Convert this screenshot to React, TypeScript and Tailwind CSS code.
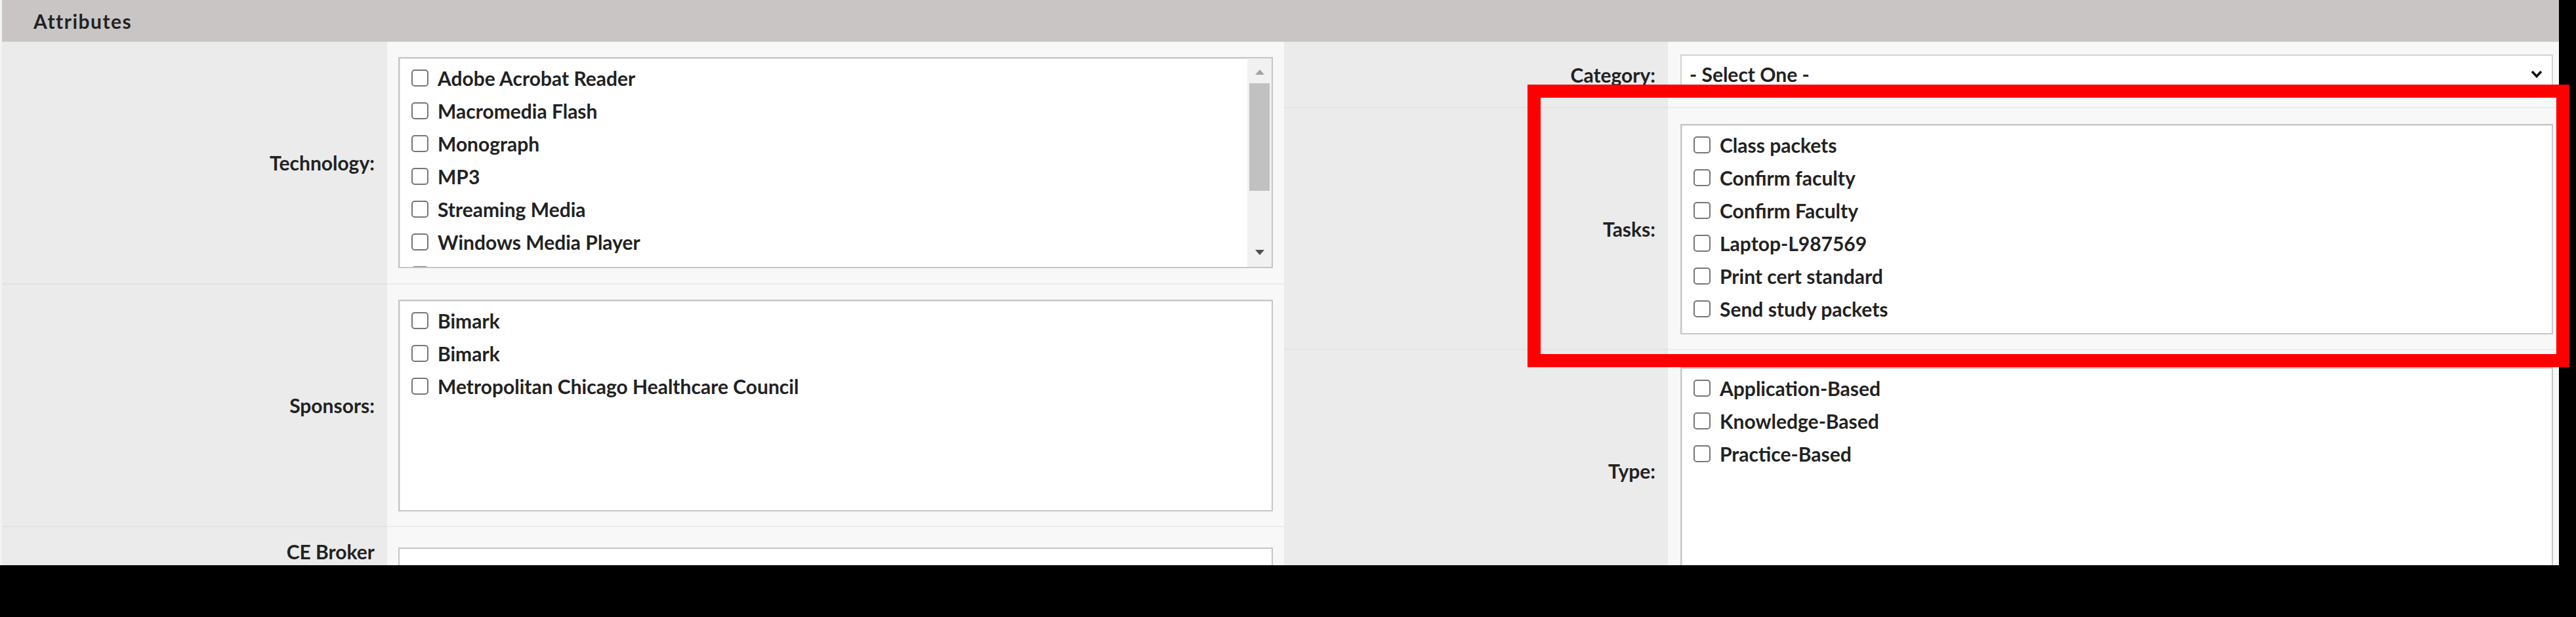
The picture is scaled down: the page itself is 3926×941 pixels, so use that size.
import type { ReactNode } from 'react';

const technology = [
  'Adobe Acrobat Reader',
  'Macromedia Flash',
  'Monograph',
  'MP3',
  'Streaming Media',
  'Windows Media Player',
  'Webcast',
];
const sponsors = ['Bimark', 'Bimark', 'Metropolitan Chicago Healthcare Council'];
const tasks = [
  'Class packets',
  'Confirm faculty',
  'Confirm Faculty',
  'Laptop-L987569',
  'Print cert standard',
  'Send study packets',
];
const types = ['Application-Based', 'Knowledge-Based', 'Practice-Based'];

function CheckItem({ label }: { label: string }) {
  return (
    <label className="flex items-center h-[50px] gap-[14px] whitespace-nowrap">
      <input
        type="checkbox"
        className="appearance-none shrink-0 w-[26px] h-[26px] border-2 border-[#767676] rounded-[5px] bg-white m-0"
      />
      <span>{label}</span>
    </label>
  );
}

function CheckList({ items, height, scroll }: { items: string[]; height: string; scroll?: boolean }) {
  return (
    <div className={`flex bg-white border-2 border-[#c6c6c6] shadow-[inset_1px_1px_0_#e4e4e4] overflow-hidden ${height}`}>
      <div className="flex-1 pl-[18px] pt-[5px] overflow-hidden">
        {items.map((item, i) => (
          <CheckItem key={i} label={item} />
        ))}
      </div>
      {scroll && (
        <div className="w-[37px] h-full bg-[#f1f1f1] flex flex-col shrink-0">
          <div className="h-[38px] flex items-center justify-center pt-[4px]">
            <svg width="14" height="8" viewBox="0 0 14 8">
              <polygon points="7,0 14,8 0,8" fill="#a3a3a3" />
            </svg>
          </div>
          <div className="h-[164px] mx-[3px] bg-[#c1c1c1]" />
          <div className="flex-1" />
          <div className="h-[44px] flex items-center justify-center">
            <svg width="14" height="8" viewBox="0 0 14 8">
              <polygon points="0,0 14,0 7,8" fill="#505050" />
            </svg>
          </div>
        </div>
      )}
    </div>
  );
}

function Row({
  label,
  labelWidth,
  valueClass,
  labelClass = 'items-center',
  children,
}: {
  label: ReactNode;
  labelWidth: string;
  valueClass: string;
  labelClass?: string;
  children: ReactNode;
}) {
  return (
    <div className="flex">
      <div
        className={`${labelWidth} shrink-0 bg-[#ebebeb] border-b-2 border-[#e2e2e2] flex justify-end pr-[19px] text-right ${labelClass}`}
      >
        {label}
      </div>
      <div className={`flex-1 bg-[#f8f8f8] border-b-2 border-[#ececec] ${valueClass}`}>{children}</div>
    </div>
  );
}

export default function App() {
  return (
    <div className="relative w-[3926px] h-[941px] bg-black overflow-hidden font-['Lato','Noto_Sans',sans-serif] font-bold text-[30px] leading-[30px] text-[#222]">
      <div className="w-[3900px] h-[862px] overflow-hidden bg-[#f3f3f3] pl-[3px]">
        <div className="h-[64px] bg-[#c9c5c4] border-b border-[#d6d3d2] flex items-center pl-[48px] tracking-[1.5px]">
          Attributes
        </div>

        <div className="flex">
          {/* left column */}
          <div className="w-[1954px] shrink-0">
            <Row label="Technology:" labelWidth="w-[587px]" valueClass="pl-[17px] pr-[17px] pt-[23px] pb-[23px]">
              <CheckList items={technology} height="h-[322px]" scroll />
            </Row>
            <Row label="Sponsors:" labelWidth="w-[587px]" valueClass="pl-[17px] pr-[17px] pt-[23px] pb-[22px]">
              <CheckList items={sponsors} height="h-[323px]" />
            </Row>
            <Row
              label="CE Broker"
              labelWidth="w-[587px]"
              labelClass="items-start pt-[22px]"
              valueClass="pl-[17px] pr-[17px] pt-[31px] pb-[22px]"
            >
              <div className="h-[320px] bg-white border-2 border-[#c6c6c6]" />
            </Row>
          </div>

          {/* right column */}
          <div className="flex-1">
            <Row label="Category:" labelWidth="w-[585px]" valueClass="pl-[19px] pr-[9px] pt-[19px] pb-[20px]">
              <div className="h-[60px] bg-white border-2 border-[#d2d2d2] flex items-center justify-between pl-[12px] pr-[14px]">
                <span>- Select One -</span>
                <svg width="18" height="12" viewBox="0 0 18 12">
                  <polyline points="2,2 9,9.5 16,2" fill="none" stroke="#111" strokeWidth="3.5" />
                </svg>
              </div>
            </Row>
            <Row label="Tasks:" labelWidth="w-[585px]" valueClass="pl-[19px] pr-[9px] pt-[24px] pb-[22px]">
              <CheckList items={tasks} height="h-[321px]" />
            </Row>
            <Row label="Type:" labelWidth="w-[585px]" valueClass="pl-[19px] pr-[9px] pt-[26px] pb-[22px]">
              <CheckList items={types} height="h-[320px]" />
            </Row>
          </div>
        </div>
      </div>

      {/* red highlight annotation */}
      <div className="absolute left-[2328px] top-[129px] w-[1588px] h-[431px] border-[20px] border-[#ff0000] pointer-events-none" />
    </div>
  );
}
